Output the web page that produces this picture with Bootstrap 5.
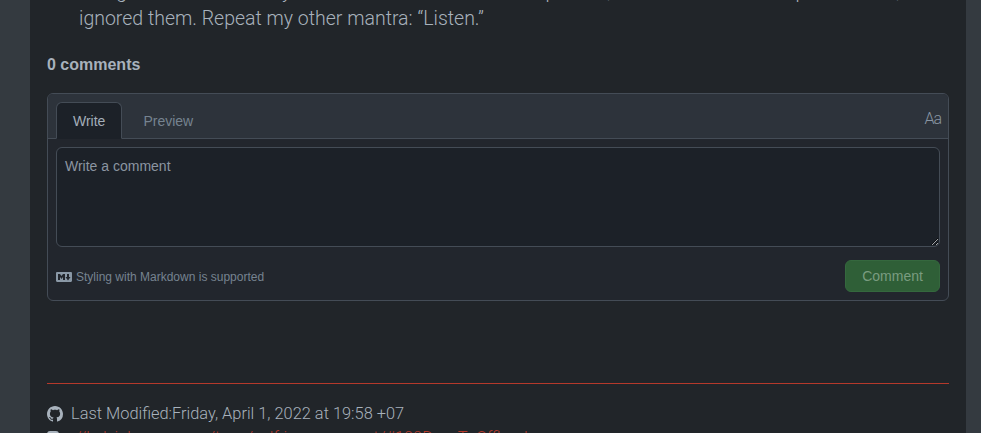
<!DOCTYPE html>
<html lang="en">
<head>
  <meta charset="UTF-8">
  <title>Post comments</title>
  <meta name="viewport" content="width=device-width, initial-scale=1">
  <link href="https://cdn.jsdelivr.net/npm/bootstrap@5.3.0/dist/css/bootstrap.min.css" rel="stylesheet">
  <style>
    html, body { height: 433px; overflow: hidden; }
    body { background-color: #343a40; }
    .post-column {
      margin: -22px 15px 0 30px;
      padding: 0 17px;
      height: 455px;
      overflow: hidden;
      background-color: #212529;
      color: #a8b2bc;
      font-family: Roboto, sans-serif;
    }
    .post-text {
      margin: 0 0 0 32px;
      font-size: 19.5px;
      font-weight: 300;
      line-height: 27px;
      white-space: nowrap;
    }
    .comment-count {
      margin: 21px 0 16px;
      font: 700 16px/24px "Liberation Sans", sans-serif;
      color: #a8b2bc;
    }
    .comment-box {
      height: 208px;
      background-color: #22262d;
      border: 1px solid #444c56;
      border-radius: 6px;
      font-family: "Liberation Sans", sans-serif;
    }
    .comment-head {
      height: 45px;
      padding: 8px 8px 0;
      background-color: #2d333b;
      border-bottom: 1px solid #444c56;
      border-radius: 5px 5px 0 0;
    }
    .comment-tabs { border: 0; gap: 4px; }
    .comment-tabs .nav-link {
      height: 37px;
      padding: 8px 16px 0;
      font-size: 14px;
      line-height: 20px;
      color: #768390;
      border: 1px solid transparent;
      border-radius: 6px 6px 0 0;
    }
    .comment-tabs .nav-link.active {
      color: #a3aeb9;
      background-color: #1c2128;
      border-color: #444c56 #444c56 #1c2128;
    }
    .font-toggle {
      font: 300 16px/20px Roboto, sans-serif;
      letter-spacing: -1px;
      color: #8a96a3;
      margin-top: 7px;
      margin-right: -1px;
    }
    .comment-input {
      display: block;
      height: 100px;
      padding: 8px;
      font-size: 14px;
      line-height: 20px;
      color: #adbac7;
      background-color: #1c2128;
      border: 1px solid #444c56;
      border-radius: 6px;
    }
    .comment-input::placeholder { color: #8b95a1; opacity: 1; }
    .comment-input:focus { color: #adbac7; background-color: #1c2128; border-color: #444c56; box-shadow: none; }
    .hint-row { margin-top: 13px; }
    .md-hint { font-size: 12px; color: #768390; gap: 4px; padding-top: 2px; }
    .md-hint svg { fill: #8a98a6; }
    .comment-btn {
      width: 95px;
      height: 32px;
      padding: 0;
      font-size: 14px;
      color: #7a9c80;
      background-color: #2f5f37;
      border: 1px solid #35683e;
      border-radius: 6px;
    }
    .comment-btn:disabled { color: #7a9c80; background-color: #2f5f37; border-color: #35683e; opacity: 1; }
    .post-rule {
      margin: 82px 0 19px;
      border: 0;
      border-top: 1px solid #b5392b;
      opacity: 1;
    }
    .post-meta { font-size: 16.4px; font-weight: 300; line-height: 21px; gap: 8px; }
    .post-meta svg { fill: #a8b2bc; flex: none; }
    .meta-link-row { margin-top: 3px; }
    .post-tag { color: #b5392b; text-decoration: none; margin-left: 4px; }
  </style>
</head>
<body>
  <main class="post-column">
    <p class="post-text">Being told all that when you listen to all the other vital opinions, and others with their preferences,<br>ignored them. Repeat my other mantra: “Listen.”</p>

    <h2 class="comment-count">0 comments</h2>

    <div class="comment-box">
      <div class="comment-head d-flex justify-content-between">
        <ul class="nav nav-tabs comment-tabs">
          <li class="nav-item"><a class="nav-link active" href="#">Write</a></li>
          <li class="nav-item"><a class="nav-link" href="#">Preview</a></li>
        </ul>
        <span class="font-toggle">Aa</span>
      </div>
      <div class="px-2 pt-2">
        <textarea class="form-control comment-input" placeholder="Write a comment"></textarea>
        <div class="hint-row d-flex justify-content-between align-items-center">
          <span class="md-hint d-flex align-items-center">
            <svg width="16" height="16" viewBox="0 0 16 16"><path d="M14.85 3H1.15C.52 3 0 3.52 0 4.15v7.69C0 12.48.52 13 1.15 13h13.69c.64 0 1.15-.52 1.15-1.15v-7.7C16 3.52 15.48 3 14.85 3zM9 11H7V8L5.5 9.92 4 8v3H2V5h2l1.5 2L7 5h2v6zm2.99.5L9.5 8H11V5h2v3h1.5l-2.51 3.5z"/></svg>
            Styling with Markdown is supported
          </span>
          <button class="btn comment-btn" type="button" disabled>Comment</button>
        </div>
      </div>
    </div>

    <hr class="post-rule">

    <div class="post-meta d-flex align-items-center">
      <svg width="16" height="16" viewBox="0 0 16 16"><path d="M8 0C3.58 0 0 3.58 0 8c0 3.54 2.29 6.53 5.47 7.59.4.07.55-.17.55-.38 0-.19-.01-.82-.01-1.49-2.01.37-2.53-.49-2.69-.94-.09-.23-.48-.94-.82-1.13-.28-.15-.68-.52-.01-.53.63-.01 1.08.58 1.23.82.72 1.21 1.87.87 2.33.66.07-.52.28-.87.51-1.07-1.78-.2-3.64-.89-3.64-3.95 0-.87.31-1.59.82-2.15-.08-.2-.36-1.02.08-2.12 0 0 .67-.21 2.2.82.64-.18 1.32-.27 2-.27.68 0 1.36.09 2 .27 1.53-1.04 2.2-.82 2.2-.82.44 1.1.16 1.92.08 2.12.51.56.82 1.27.82 2.15 0 3.07-1.87 3.75-3.65 3.95.29.25.54.73.54 1.48 0 1.07-.01 1.93-.01 2.2 0 .21.15.46.55.38A8.013 8.013 0 0016 8c0-4.42-3.58-8-8-8z"/></svg>
      <span>Last Modified:Friday, April 1, 2022 at 19:58 +07</span>
    </div>
    <div class="post-meta meta-link-row d-flex align-items-center">
      <svg width="16" height="16" viewBox="0 0 16 16"><path d="M0 4a3 3 0 0 1 3-3h6a3 3 0 0 1 3 3v12H0z"/></svg>
      <a class="post-tag" href="#">//kalvinhoang.com/tags/self-improvement/#100DaysToOffload</a>
    </div>
  </main>
  <script src="https://cdn.jsdelivr.net/npm/bootstrap@5.3.0/dist/js/bootstrap.bundle.min.js"></script>
</body>
</html>
